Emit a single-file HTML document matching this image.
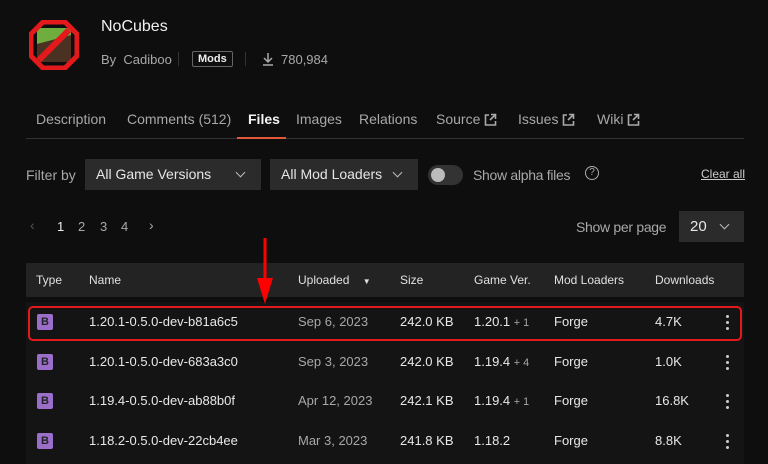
<!DOCTYPE html>
<html><head><meta charset="utf-8"><style>
*{margin:0;padding:0;box-sizing:border-box}
body{width:768px;height:464px;background:#0e0e0e;font-family:"Liberation Sans",sans-serif;color:#ddd;position:relative;overflow:hidden}
.a{position:absolute;white-space:nowrap}
.g{color:#a8a8a8}
.sel{position:absolute;background:#2b2b2b;height:31px;top:159px;color:#e6e6e6;font-size:14px;line-height:31px;padding-left:11px}
.chev{position:absolute;top:12px;width:7px;height:7px;border-right:1.5px solid #bbb;border-bottom:1.5px solid #bbb;transform:rotate(45deg)}
.tab{position:absolute;top:111px;font-size:14px;color:#a8a8a8}
.row{position:absolute;left:26px;width:718px;height:40px;background:#141414;font-size:13px;color:#e8e8e8}
.row span{position:absolute;top:12px}
.b{position:absolute;left:11px;top:12px;width:16px;height:16px;background:#9b6fc9;border-radius:2px;color:#222;font-size:11px;line-height:16px;text-align:center;font-weight:bold}
.dots{position:absolute;left:700px;top:13px;width:3px}
.dots i{display:block;width:3px;height:3px;background:#ccc;border-radius:50%;margin-bottom:3px}
.ext{position:relative;top:2px;margin-left:4px}
</style></head><body>
<svg class="a" style="left:29px;top:20px" width="50" height="50" viewBox="0 0 50 50">
<rect x="8" y="8" width="34" height="34" fill="#4a3122"/>
<polygon points="8,8 42,8 42,15 8,24" fill="#6fae3e"/>
<polygon points="14,2 36,2 48,14 48,36 36,48 14,48 2,36 2,14" fill="none" stroke="#e3191c" stroke-width="5"/>
<line x1="40" y1="10" x2="10" y2="40" stroke="#e3191c" stroke-width="6"/>
</svg>
<div class="a" style="left:101px;top:18px;font-size:16px;color:#f0f0f0">NoCubes</div>
<div class="a g" style="left:101px;top:52px;font-size:13px">By&nbsp; Cadiboo</div>
<div class="a" style="left:178px;top:52px;width:1px;height:14px;background:#333"></div>
<div class="a" style="left:192px;top:51px;border:1px solid #666;border-radius:2px;font-size:11px;padding:1px 5px;color:#eee;font-weight:bold">Mods</div>
<div class="a" style="left:245px;top:52px;width:1px;height:14px;background:#333"></div>
<svg class="a" style="left:261px;top:52px" width="14" height="15"><path d="M7 1v9M3 6l4 4 4-4M2 13h10" stroke="#aaa" stroke-width="1.5" fill="none"/></svg>
<div class="a g" style="left:281px;top:52px;font-size:13px">780,984</div>

<div class="tab" style="left:36px">Description</div>
<div class="tab" style="left:127px">Comments (512)</div>
<div class="tab" style="left:248px;color:#f4f4f4;font-weight:bold">Files</div>
<div class="tab" style="left:296px">Images</div>
<div class="tab" style="left:359px">Relations</div>
<div class="tab" style="left:436px">Source<svg class="ext" width="13" height="13"><path d="M5 2H1.5v10h10V8M7 1.5h4.5V6M11.5 1.5L6 7" stroke="#aaa" stroke-width="1.6" fill="none"/></svg></div>
<div class="tab" style="left:518px">Issues<svg class="ext" width="13" height="13"><path d="M5 2H1.5v10h10V8M7 1.5h4.5V6M11.5 1.5L6 7" stroke="#aaa" stroke-width="1.6" fill="none"/></svg></div>
<div class="tab" style="left:597px">Wiki<svg class="ext" width="13" height="13"><path d="M5 2H1.5v10h10V8M7 1.5h4.5V6M11.5 1.5L6 7" stroke="#aaa" stroke-width="1.6" fill="none"/></svg></div>
<div class="a" style="left:26px;top:138px;width:718px;height:1px;background:#333"></div>
<div class="a" style="left:237px;top:137px;width:49px;height:2px;background:#e0583a"></div>

<div class="a g" style="left:26px;top:167px;font-size:14px">Filter by</div>
<div class="sel" style="left:85px;width:176px">All Game Versions<div class="chev" style="left:152px;top:10px"></div></div>
<div class="sel" style="left:270px;width:148px">All Mod Loaders<div class="chev" style="left:124px;top:10px"></div></div>
<div class="a" style="left:428px;top:165px;width:35px;height:20px;border-radius:10px;background:#333"></div>
<div class="a" style="left:431px;top:168px;width:14px;height:14px;border-radius:50%;background:#bbb"></div>
<div class="a g" style="left:473px;top:167px;font-size:14px;letter-spacing:-0.3px">Show alpha files</div>
<div class="a" style="left:585px;top:166px;width:14px;height:14px;border:1px solid #aaa;border-radius:50%;font-size:10px;line-height:12px;text-align:center;color:#aaa">?</div>
<div class="a" style="left:701px;top:167px;font-size:12px;color:#ccc;text-decoration:underline">Clear all</div>

<div class="a" style="left:30px;top:217px;font-size:14px;color:#555">‹</div>
<div class="a" style="left:57px;top:219px;font-size:13px;color:#eee">1</div>
<div class="a g" style="left:78px;top:219px;font-size:13px">2</div>
<div class="a g" style="left:100px;top:219px;font-size:13px">3</div>
<div class="a g" style="left:121px;top:219px;font-size:13px">4</div>
<div class="a g" style="left:149px;top:217px;font-size:14px">›</div>
<div class="a g" style="left:576px;top:219px;font-size:14px;letter-spacing:-0.3px">Show per page</div>
<div class="sel" style="left:679px;top:211px;width:65px;height:31px;font-size:15px">20<div class="chev" style="left:42px;top:10px"></div></div>

<div class="a" style="left:26px;top:263px;width:718px;height:34px;background:#232323;font-size:12px;color:#e0e0e0">
<span class="a" style="left:10px;top:10px">Type</span><span class="a" style="left:63px;top:10px">Name</span><span class="a" style="left:272px;top:10px">Uploaded&nbsp;&nbsp;&nbsp; <span style="font-size:8px">▼</span></span><span class="a" style="left:374px;top:10px">Size</span><span class="a" style="left:448px;top:10px">Game Ver.</span><span class="a" style="left:528px;top:10px">Mod Loaders</span><span class="a" style="left:629px;top:10px">Downloads</span></div>

<div class="row" style="top:302px"><div class="b">B</div><span style="left:63px">1.20.1-0.5.0-dev-b81a6c5</span><span class="g" style="left:272px">Sep 6, 2023</span><span style="left:374px">242.0 KB</span><span style="left:448px">1.20.1 <small class="g">+ 1</small></span><span style="left:528px">Forge</span><span style="left:629px">4.7K</span><div class="dots"><i></i><i></i><i></i></div></div>
<div class="row" style="top:342px"><div class="b">B</div><span style="left:63px">1.20.1-0.5.0-dev-683a3c0</span><span class="g" style="left:272px">Sep 3, 2023</span><span style="left:374px">242.0 KB</span><span style="left:448px">1.19.4 <small class="g">+ 4</small></span><span style="left:528px">Forge</span><span style="left:629px">1.0K</span><div class="dots"><i></i><i></i><i></i></div></div>
<div class="row" style="top:381px"><div class="b">B</div><span style="left:63px">1.19.4-0.5.0-dev-ab88b0f</span><span class="g" style="left:272px">Apr 12, 2023</span><span style="left:374px">242.1 KB</span><span style="left:448px">1.19.4 <small class="g">+ 1</small></span><span style="left:528px">Forge</span><span style="left:629px">16.8K</span><div class="dots"><i></i><i></i><i></i></div></div>
<div class="row" style="top:421px;height:43px"><div class="b">B</div><span style="left:63px">1.18.2-0.5.0-dev-22cb4ee</span><span class="g" style="left:272px">Mar 3, 2023</span><span style="left:374px">241.8 KB</span><span style="left:448px">1.18.2</span><span style="left:528px">Forge</span><span style="left:629px">8.8K</span><div class="dots"><i></i><i></i><i></i></div></div>

<div class="a" style="left:28px;top:306px;width:714px;height:35px;border:2px solid #e3191c;border-radius:5px"></div>
<svg class="a" style="left:255px;top:238px" width="20" height="70"><rect x="8.5" y="0" width="3" height="50" fill="#f00"/><polygon points="2,40 18,40 10,66" fill="#f00"/></svg>
</body></html>
